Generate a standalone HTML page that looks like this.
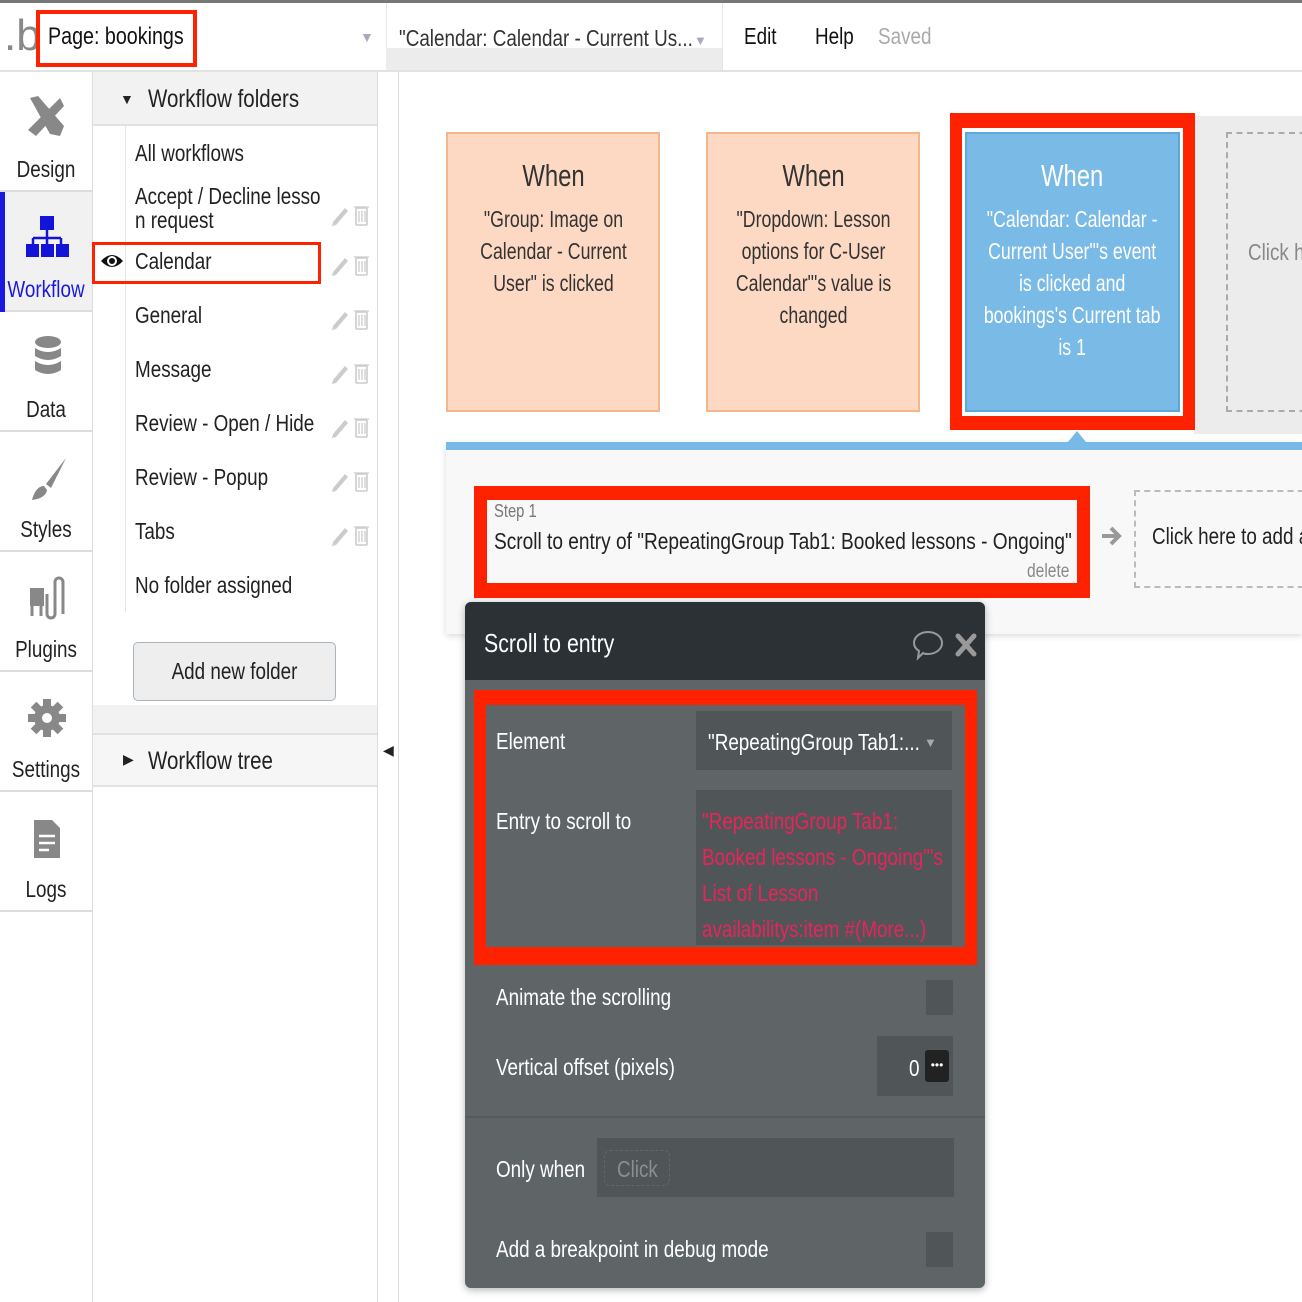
<!DOCTYPE html>
<html><head><meta charset="utf-8">
<style>
*{box-sizing:border-box;margin:0;padding:0}
body{width:1302px;height:1302px;position:relative;overflow:hidden;background:#fff;font-family:"Liberation Sans",sans-serif;color:#222;font-size:23px}
.a{position:absolute}
.t{position:absolute;white-space:nowrap;line-height:1;transform:scaleX(.82);transform-origin:0 0}
.nav{position:absolute;left:0;width:92px;height:120px;border-bottom:2px solid #ddd;text-align:center}
.nav span{position:absolute;left:-20px;right:-20px;top:86px;font-size:23px;color:#222;transform:scaleX(.82);line-height:1}
.nav svg{position:absolute;left:26px;top:22px}
.when{position:absolute;top:132px;width:214px;height:280px;background:#fdd9c3;border:2px solid #f4b78c;text-align:center;color:#333}
.sc{width:130%;margin-left:-15%;transform:scaleX(.77)}
.when .h{font-size:31px;margin-top:26px;line-height:1}
.when .b{font-size:23px;line-height:32px;margin-top:12px;white-space:nowrap}
</style></head><body>
<div class="a" style="left:0;top:0;width:1302px;height:3px;background:#777"></div>
<div class="a" style="left:0;top:70px;width:1302px;height:2px;background:#e2e2e2"></div>
<div class="t" style="left:4px;top:14px;font-size:44px;color:#888;transform:none">.b</div>
<div class="a" style="left:36px;top:10px;width:161px;height:57px;border:4px solid #ff2200"></div>
<div class="t" style="left:48px;top:25px;font-size:24px;color:#111">Page: bookings</div>
<div class="t" style="left:360px;top:30px;font-size:14px;color:#aab;transform:none">▼</div>
<div class="a" style="left:386px;top:3px;width:1px;height:67px;background:#e6e6e6"></div>
<div class="a" style="left:386px;top:48px;width:336px;height:22px;background:#ececec"></div>
<div class="a" style="left:722px;top:3px;width:1px;height:67px;background:#e6e6e6"></div>
<div class="t" style="left:399px;top:27px;font-size:23px;color:#333">"Calendar: Calendar - Current Us...</div>
<div class="t" style="left:694px;top:34px;font-size:13px;color:#aab;transform:none">▼</div>
<div class="t" style="left:744px;top:25px;font-size:23px;color:#111">Edit</div>
<div class="t" style="left:815px;top:25px;font-size:23px;color:#111">Help</div>
<div class="t" style="left:878px;top:25px;font-size:23px;color:#aaa">Saved</div>

<div class="a" style="left:92px;top:72px;width:1px;height:1230px;background:#ddd"></div>
<div class="nav" style="top:72px"><svg width="40" height="48" viewBox="0 0 40 48"><path d="M4 4l8-2 26 30-4 10-10-2z" fill="#888"/><path d="M34 4l4 8-28 30-8-6z" fill="#888"/></svg><span>Design</span></div>
<div class="nav" style="top:192px;background:#f1f1f1"><div class="a" style="left:0;top:0;width:5px;height:120px;background:#1a1adf"></div>
<svg width="44" height="48" viewBox="0 0 44 48"><rect x="14" y="2" width="14" height="14" fill="#1414d8"/><path d="M21 16v8M7 24h28M7 24v6M21 24v6M35 24v6" stroke="#1414d8" stroke-width="2.5" fill="none"/><rect x="0" y="30" width="13" height="13" fill="#1414d8"/><rect x="15" y="30" width="13" height="13" fill="#1414d8"/><rect x="30" y="30" width="13" height="13" fill="#1414d8"/></svg><span style="color:#1a1adf">Workflow</span></div>
<div class="nav" style="top:312px"><svg width="40" height="50" viewBox="0 0 40 50"><ellipse cx="22" cy="8" rx="13" ry="6" fill="#888"/><path d="M9 14q13 8 26 0v8q-13 8-26 0zM9 27q13 8 26 0v9q-13 8-26 0z" fill="#888"/></svg><span>Data</span></div>
<div class="nav" style="top:432px"><svg width="44" height="50" viewBox="0 0 44 50"><path d="M40 4L20 30l5 4z" fill="#888"/><path d="M18 32c-6 0-10 6-12 14 8-1 14-4 15-10z" fill="#888"/></svg><span>Styles</span></div>
<div class="nav" style="top:552px"><svg width="44" height="50" viewBox="0 0 44 50"><rect x="4" y="14" width="14" height="18" fill="#888"/><path d="M6 32v10M15 32v10" stroke="#888" stroke-width="3"/><path d="M21 20v20a4 4 0 0 0 8 0V8a4 4 0 0 1 8 0v32" stroke="#888" stroke-width="3" fill="none"/></svg><span>Plugins</span></div>
<div class="nav" style="top:672px"><svg width="44" height="50" viewBox="0 0 44 50"><g transform="translate(21 24)"><circle r="13" fill="#888"/><g fill="#888"><rect x="-4" y="-19" width="8" height="38"/><rect x="-19" y="-4" width="38" height="8"/><rect x="-4" y="-19" width="8" height="38" transform="rotate(45)"/><rect x="-4" y="-19" width="8" height="38" transform="rotate(-45)"/></g><circle r="5" fill="#fff"/></g></svg><span>Settings</span></div>
<div class="nav" style="top:792px"><svg width="44" height="50" viewBox="0 0 44 50"><path d="M8 6h18l8 8v30H8z" fill="#888"/><path d="M13 22h16M13 29h16M13 36h10" stroke="#fff" stroke-width="2.5"/></svg><span>Logs</span></div>

<div class="a" style="left:93px;top:72px;width:284px;height:54px;background:#f2f2f2;border-bottom:2px solid #e2e2e2"></div>
<div class="t" style="left:120px;top:92px;font-size:14px;transform:none">▼</div>
<div class="t" style="left:148px;top:87px;font-size:25px">Workflow folders</div>
<div class="a" style="left:125px;top:126px;width:1px;height:486px;background:#e4e4e4"></div>
<div class="t" style="left:135px;top:142px">All workflows</div>
<div class="t" style="left:135px;top:184px;line-height:24px">Accept / Decline lesso<br>n request</div>
<div class="a" style="left:92px;top:242px;width:229px;height:42px;border:3px solid #ff2200"></div>
<svg class="a" style="left:100px;top:252px" width="24" height="18" viewBox="0 0 24 18"><path d="M1 9q11-12 22 0q-11 12-22 0z" fill="#111"/><circle cx="12" cy="9" r="5" fill="#fff"/><circle cx="12" cy="9" r="3" fill="#111"/></svg>
<div class="t" style="left:135px;top:250px">Calendar</div>
<div class="t" style="left:135px;top:304px">General</div>
<div class="t" style="left:135px;top:358px">Message</div>
<div class="t" style="left:135px;top:412px">Review - Open / Hide</div>
<div class="t" style="left:135px;top:466px">Review - Popup</div>
<div class="t" style="left:135px;top:520px">Tabs</div>
<div class="t" style="left:135px;top:574px">No folder assigned</div>
<svg class="a" style="left:330px;top:202px" width="42" height="350" viewBox="0 0 42 350">
<g id="pe"><path d="M3 20L15 6l3 3L6 23 2 24z" fill="#ccc"/><rect x="26" y="6" width="11" height="17" rx="1" fill="none" stroke="#ccc" stroke-width="1.6"/><path d="M24 5h15M29 9v11M32 9v11M35 9v11" stroke="#ccc" stroke-width="1.3"/></g>
<use href="#pe" y="50"/><use href="#pe" y="104"/><use href="#pe" y="158"/><use href="#pe" y="212"/><use href="#pe" y="266"/><use href="#pe" y="320"/>
</svg>
<div class="a" style="left:93px;top:705px;width:284px;height:28px;background:#f2f2f2"></div>
<div class="a" style="left:133px;top:642px;width:203px;height:59px;border:1.5px solid #aab4bd;border-radius:5px;background:#eeeeee;text-align:center;line-height:56px;font-size:23px"><div style="transform:scaleX(.82)">Add new folder</div></div>
<div class="a" style="left:93px;top:733px;width:284px;height:54px;background:#f6f6f6;border-top:2px solid #e2e2e2;border-bottom:2px solid #e2e2e2"></div>
<div class="t" style="left:123px;top:752px;font-size:14px;transform:none">▶</div>
<div class="t" style="left:148px;top:749px;font-size:25px">Workflow tree</div>
<div class="a" style="left:377px;top:72px;width:1px;height:1230px;background:#ddd"></div>
<div class="a" style="left:398px;top:72px;width:1px;height:1230px;background:#ddd"></div>
<div class="t" style="left:383px;top:743px;font-size:14px;transform:none">◀</div>

<div class="when" style="left:446px"><div class="sc"><div class="h">When</div><div class="b">"Group: Image on<br>Calendar - Current<br>User" is clicked</div></div></div>
<div class="when" style="left:706px"><div class="sc"><div class="h">When</div><div class="b">"Dropdown: Lesson<br>options for C-User<br>Calendar"'s value is<br>changed</div></div></div>
<div class="a" style="left:1194px;top:116px;width:108px;height:318px;background:#ececec"></div>
<div class="a" style="left:1226px;top:132px;width:90px;height:280px;border:2px dashed #aaa"></div>
<div class="t" style="left:1248px;top:241px;color:#888">Click h</div>
<div class="a" style="left:950px;top:113px;width:245px;height:317px;background:#ff2200"></div>
<div class="a" style="left:962px;top:128px;width:221px;height:288px;background:#fff"></div>
<div class="when" style="left:965px;top:132px;width:215px;height:280px;background:#79bae6;border-color:#5aa8dc;color:#fff"><div class="sc"><div class="h">When</div><div class="b">"Calendar: Calendar -<br>Current User"'s event<br>is clicked and<br>bookings's Current tab<br>is 1</div></div></div>

<div class="a" style="left:446px;top:442px;width:856px;height:192px;background:#f8f8f9;box-shadow:0 2px 6px rgba(0,0,0,.15)"></div>
<div class="a" style="left:446px;top:442px;width:856px;height:8px;background:#78b9e6"></div>
<div class="a" style="left:1068px;top:431px;width:0;height:0;border-left:9px solid transparent;border-right:9px solid transparent;border-bottom:11px solid #78b9e6"></div>
<div class="a" style="left:474px;top:486px;width:616px;height:112px;background:#ff2200"></div>
<div class="a" style="left:487px;top:500px;width:590px;height:83px;background:#f8f8f9"></div>
<div class="t" style="left:494px;top:502px;font-size:18px;color:#777">Step 1</div>
<div class="t" style="left:494px;top:530px;transform:scaleX(.83)">Scroll to entry of "RepeatingGroup Tab1: Booked lessons - Ongoing"</div>
<div class="t" style="left:1027px;top:562px;font-size:19px;color:#888">delete</div>
<svg class="a" style="left:1100px;top:524px" width="24" height="24" viewBox="0 0 24 24"><path d="M2 12h16M11 4l8 8-8 8" stroke="#999" stroke-width="4" fill="none"/></svg>
<div class="a" style="left:1134px;top:490px;width:180px;height:98px;border:2px dashed #bbb"></div>
<div class="t" style="left:1152px;top:525px">Click here to add a</div>

<div class="a" style="left:465px;top:602px;width:520px;height:686px;background:#5f6467;border-radius:6px;box-shadow:0 2px 8px rgba(0,0,0,.3);overflow:hidden">
 <div class="a" style="left:0;top:0;width:520px;height:78px;background:#2b3134"></div>
</div>
<div class="t" style="left:484px;top:630px;font-size:26px;color:#fff">Scroll to entry</div>
<svg class="a" style="left:912px;top:628px" width="66" height="36" viewBox="0 0 66 36"><path d="M16 4c8 0 14 5 14 11s-6 11-14 11c-2 0-4 0-5-1l-5 5 1-7c-3-2-5-5-5-8C2 9 8 4 16 4z" fill="none" stroke="#999" stroke-width="2"/><path d="M46 8l16 18M62 8L46 26" stroke="#999" stroke-width="5" stroke-linecap="round"/></svg>
<div class="a" style="left:474px;top:690px;width:503px;height:275px;background:#ff2200"></div>
<div class="a" style="left:486px;top:705px;width:479px;height:242px;background:#5f6467"></div>
<div class="t" style="left:496px;top:730px;color:#fff">Element</div>
<div class="a" style="left:696px;top:711px;width:256px;height:59px;background:#505558"></div>
<div class="t" style="left:708px;top:731px;color:#fff">"RepeatingGroup Tab1:...</div>
<div class="t" style="left:924px;top:736px;font-size:13px;color:#aaa;transform:none">▼</div>
<div class="t" style="left:496px;top:810px;color:#fff">Entry to scroll to</div>
<div class="a" style="left:696px;top:790px;width:256px;height:155px;background:#505558"></div>
<div class="t" style="left:702px;top:803px;line-height:36px;color:#e8245a">"RepeatingGroup Tab1:<br>Booked lessons - Ongoing"'s<br>List of Lesson<br>availabilitys:item #(More...)</div>
<div class="t" style="left:496px;top:986px;color:#fff">Animate the scrolling</div>
<div class="a" style="left:926px;top:980px;width:27px;height:35px;background:#505558"></div>
<div class="t" style="left:496px;top:1056px;color:#fff">Vertical offset (pixels)</div>
<div class="a" style="left:877px;top:1036px;width:76px;height:60px;background:#505558"></div>
<div class="t" style="left:909px;top:1057px;color:#fff">0</div>
<div class="a" style="left:925px;top:1050px;width:24px;height:32px;background:#222;border-radius:3px;color:#fff;font-size:12px;line-height:30px;text-align:center">•••</div>
<div class="a" style="left:465px;top:1116px;width:520px;height:2px;background:#545a5d"></div>
<div class="t" style="left:496px;top:1158px;color:#fff">Only when</div>
<div class="a" style="left:597px;top:1138px;width:357px;height:59px;background:#505558"></div>
<div class="a" style="left:604px;top:1150px;width:66px;height:36px;border:1px dashed #666;border-radius:6px"></div>
<div class="t" style="left:617px;top:1158px;color:#8a8f92">Click</div>
<div class="t" style="left:496px;top:1238px;color:#fff">Add a breakpoint in debug mode</div>
<div class="a" style="left:926px;top:1232px;width:27px;height:35px;background:#505558"></div>
</body></html>
